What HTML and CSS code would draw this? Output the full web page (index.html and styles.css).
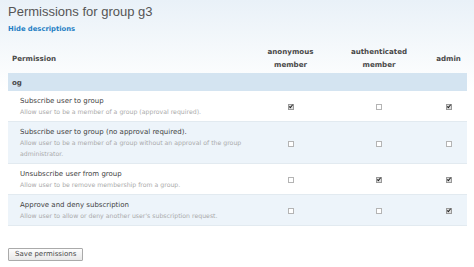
FILE: index.html
```html
<!DOCTYPE html>
<html lang="en">
<head>
    <meta charset="UTF-8">
    <title>Permissions for group g3</title>
    <link rel="stylesheet" href="styles.css">
</head>
<body>
    <h2 class="title">Permissions for group g3</h2>
    <div class="toggle"><a href="#">Hide descriptions</a></div>

    <form id="permissions">
        <table class="perms">
            <colgroup>
                <col class="c-perm">
                <col class="c-anon">
                <col class="c-auth">
                <col class="c-admin">
            </colgroup>
            <thead>
                <tr>
                    <th class="perm-head">Permission</th>
                    <th>anonymous<br>member</th>
                    <th>authenticated<br>member</th>
                    <th>admin</th>
                </tr>
            </thead>
            <tbody>
                <tr class="module">
                    <td colspan="4">og</td>
                </tr>
                <tr class="odd">
                    <td class="permission">
                        <div class="name">Subscribe user to group</div>
                        <div class="desc">Allow user to be a member of a group (approval required).</div>
                    </td>
                    <td class="check"><span class="cb on"></span></td>
                    <td class="check"><span class="cb"></span></td>
                    <td class="check"><span class="cb on"></span></td>
                </tr>
                <tr class="even">
                    <td class="permission">
                        <div class="name">Subscribe user to group (no approval required).</div>
                        <div class="desc">Allow user to be a member of a group without an approval of the group administrator.</div>
                    </td>
                    <td class="check"><span class="cb"></span></td>
                    <td class="check"><span class="cb"></span></td>
                    <td class="check"><span class="cb"></span></td>
                </tr>
                <tr class="odd">
                    <td class="permission">
                        <div class="name">Unsubscribe user from group</div>
                        <div class="desc">Allow user to be remove membership from a group.</div>
                    </td>
                    <td class="check"><span class="cb"></span></td>
                    <td class="check"><span class="cb on"></span></td>
                    <td class="check"><span class="cb on"></span></td>
                </tr>
                <tr class="even">
                    <td class="permission">
                        <div class="name">Approve and deny subscription</div>
                        <div class="desc">Allow user to allow or deny another user's subscription request.</div>
                    </td>
                    <td class="check"><span class="cb"></span></td>
                    <td class="check"><span class="cb"></span></td>
                    <td class="check"><span class="cb on"></span></td>
                </tr>
            </tbody>
        </table>

        <button type="submit" class="save-btn">Save permissions</button>
    </form>
</body>
</html>
```

FILE: styles.css
```css
html { background: #fff; }
body { margin: 0; padding: 4px 8px 8px; font-family: "DejaVu Sans", Verdana, sans-serif; color: #494949; background: linear-gradient(#e9f1f8 0, #f4f8fb 45px, #fff 90px) no-repeat; min-height: 255px; }
.title { margin: 0; font-family: "Liberation Sans", Arial, sans-serif; font-weight: normal; font-size: 13px; line-height: 16px; color: #555; }
.toggle { margin-top: 5px; font-size: 6.8px; line-height: 9px; font-weight: bold; }
.toggle a { color: #1f7fc4; text-decoration: none; }
.perms { width: 459px; margin-top: 9px; border-collapse: collapse; table-layout: fixed; }
.c-perm { width: 245px; }
.c-anon { width: 75px; }
.c-auth { width: 102px; }
.c-admin { width: 37px; }
.perms th { font-size: 7.1px; line-height: 13px; font-weight: bold; padding: 2px 0; height: 25px; text-align: center; color: #494949; }
.perms th.perm-head { text-align: left; padding-left: 4px; }
.module td { background: #d4e4f1; font-size: 7.1px; font-weight: bold; height: 18px; padding: 0 4px; }
.odd td { background: #fff; }
.even td { background: #edf4fa; }
.odd, .even { border-bottom: 1px solid #e2eaf0; }
.permission { padding: 5px 2px 4px 12px; vertical-align: top; }
.name { font-size: 7px; line-height: 10px; color: #3f3f3f; }
.desc { font-size: 6.2px; line-height: 11px; color: #aaa; margin-right: -18px; }
.check { text-align: center; vertical-align: middle; }
.cb { display: inline-block; width: 4px; height: 4px; border: 1px solid #b4b4b4; background: #fff; position: relative; vertical-align: middle; }
.cb.on { border-color: #999; background: #ddd; }
.cb.on::after { content: ""; position: absolute; left: 1px; top: -1px; width: 1px; height: 3px; border: solid #222; border-width: 0 1px 1px 0; transform: rotate(40deg); }
.save-btn { margin-top: 22px; font-family: "DejaVu Sans", Verdana, sans-serif; font-size: 7px; color: #494949; padding: 0 6px; height: 13px; line-height: 11px; border: 1px solid #aaa; border-radius: 1px; background: linear-gradient(#fdfdfd, #e8e8e8); }
```
